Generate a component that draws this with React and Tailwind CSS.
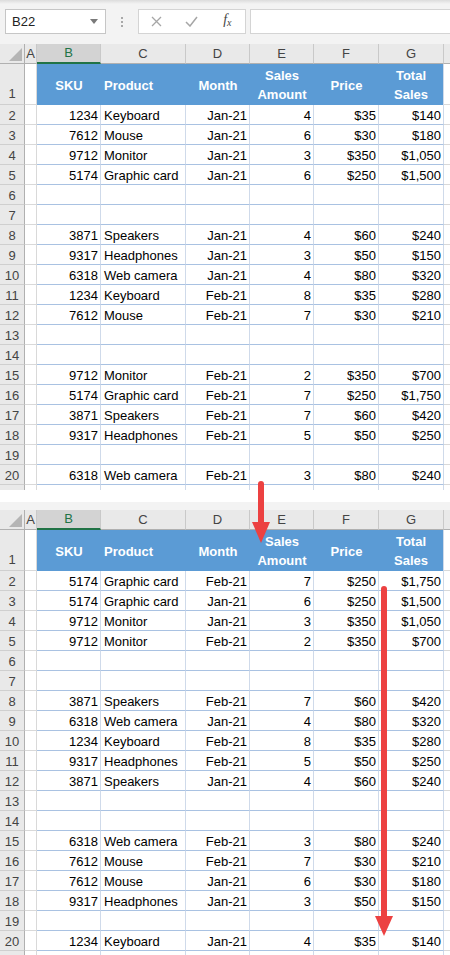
const COLS = 'grid-cols-[25px_12px_64px_85px_64px_64px_65px_65px_6px]';

const first = [
  ['1234', 'Keyboard', 'Jan-21', '4', '$35', '$140'],
  ['7612', 'Mouse', 'Jan-21', '6', '$30', '$180'],
  ['9712', 'Monitor', 'Jan-21', '3', '$350', '$1,050'],
  ['5174', 'Graphic card', 'Jan-21', '6', '$250', '$1,500'],
  null,
  null,
  ['3871', 'Speakers', 'Jan-21', '4', '$60', '$240'],
  ['9317', 'Headphones', 'Jan-21', '3', '$50', '$150'],
  ['6318', 'Web camera', 'Jan-21', '4', '$80', '$320'],
  ['1234', 'Keyboard', 'Feb-21', '8', '$35', '$280'],
  ['7612', 'Mouse', 'Feb-21', '7', '$30', '$210'],
  null,
  null,
  ['9712', 'Monitor', 'Feb-21', '2', '$350', '$700'],
  ['5174', 'Graphic card', 'Feb-21', '7', '$250', '$1,750'],
  ['3871', 'Speakers', 'Feb-21', '7', '$60', '$420'],
  ['9317', 'Headphones', 'Feb-21', '5', '$50', '$250'],
  null,
  ['6318', 'Web camera', 'Feb-21', '3', '$80', '$240'],
];

const sorted = [
  ['5174', 'Graphic card', 'Feb-21', '7', '$250', '$1,750'],
  ['5174', 'Graphic card', 'Jan-21', '6', '$250', '$1,500'],
  ['9712', 'Monitor', 'Jan-21', '3', '$350', '$1,050'],
  ['9712', 'Monitor', 'Feb-21', '2', '$350', '$700'],
  null,
  null,
  ['3871', 'Speakers', 'Feb-21', '7', '$60', '$420'],
  ['6318', 'Web camera', 'Jan-21', '4', '$80', '$320'],
  ['1234', 'Keyboard', 'Feb-21', '8', '$35', '$280'],
  ['9317', 'Headphones', 'Feb-21', '5', '$50', '$250'],
  ['3871', 'Speakers', 'Jan-21', '4', '$60', '$240'],
  null,
  null,
  ['6318', 'Web camera', 'Feb-21', '3', '$80', '$240'],
  ['7612', 'Mouse', 'Feb-21', '7', '$30', '$210'],
  ['7612', 'Mouse', 'Jan-21', '6', '$30', '$180'],
  ['9317', 'Headphones', 'Jan-21', '3', '$50', '$150'],
  null,
  ['1234', 'Keyboard', 'Jan-21', '4', '$35', '$140'],
];

const EMPTY = ['', '', '', '', '', ''];

function FormulaBar() {
  return (
    <div className="h-[44px] bg-[#f3f3f3] flex flex-col">
      <div className="h-[4px] bg-gradient-to-b from-[#dcdcdc] to-[#f3f3f3]" />
      <div className="mt-[5px] h-[25px] flex pl-[5px]">
        <div className="w-[101px] h-[25px] bg-white border border-[#c6c6c6] flex items-center justify-between pl-[6px] pr-[7px] text-[13px] leading-[18px] text-[#222]">
          <span>B22</span>
          <svg width="8" height="5" viewBox="0 0 8 5"><path d="M0 0h8L4 5z" fill="#7a7a7a" /></svg>
        </div>
        <div className="w-[32px] flex flex-col items-center justify-center gap-[2px]">
          <span className="w-[2px] h-[2px] bg-[#a8a8a8]" />
          <span className="w-[2px] h-[2px] bg-[#a8a8a8]" />
          <span className="w-[2px] h-[2px] bg-[#a8a8a8]" />
        </div>
        <div className="w-[108px] h-[25px] bg-white border border-[#d4d4d4] flex items-center">
          <span className="w-[36px] flex justify-center">
            <svg width="11" height="11" viewBox="0 0 11 11"><path d="M1 1l9 9M10 1l-9 9" stroke="#a6a6a6" strokeWidth="1.3" /></svg>
          </span>
          <span className="w-[36px] flex justify-center">
            <svg width="13" height="11" viewBox="0 0 13 11"><path d="M1 6l4 4 7-9" stroke="#a6a6a6" strokeWidth="1.5" fill="none" /></svg>
          </span>
          <span className="w-[36px] flex justify-center italic text-[#444] text-[14px] leading-[18px] font-['Liberation_Serif',serif]">
            f<span className="text-[10px] mt-[3px]">x</span>
          </span>
        </div>
        <div className="ml-[4px] flex-1 h-[25px] bg-white border border-r-0 border-[#d4d4d4]" />
      </div>
    </div>
  );
}

function ColumnHeads() {
  const letters = ['C', 'D', 'E', 'F', 'G'];
  return (
    <div className={`grid ${COLS} h-[20px] bg-[#e9e9e9] text-[#444] text-[13px] leading-[16px] overflow-hidden`}>
      <div className="relative border-r border-b border-[#b0b0b0]">
        <svg className="absolute left-[9px] top-[4px]" width="13" height="13" viewBox="0 0 13 13"><path d="M13 0v13H0z" fill="#b5b5b5" /></svg>
      </div>
      <div className="flex items-center justify-center border-r border-b border-r-[#c9c9c9] border-b-[#b0b0b0]">A</div>
      <div className="flex items-center justify-center bg-[#d3d3d3] text-[#217346] border-r border-r-[#c9c9c9] border-b-2 border-b-[#217346]">B</div>
      {letters.map((l) => (
        <div key={l} className="flex items-center justify-center border-r border-b border-r-[#c9c9c9] border-b-[#b0b0b0]">{l}</div>
      ))}
      <div className="border-b border-[#b0b0b0]" />
    </div>
  );
}

function HeaderRow() {
  const blue = 'bg-[#5b9bd5] text-white font-bold flex items-center leading-[19px] pt-[1px]';
  return (
    <div className={`grid ${COLS} h-[41px] text-[13px] overflow-hidden`}>
      <div className="flex items-end justify-center pb-[1px] bg-[#e9e9e9] text-[#444] leading-[18px] border-r border-b border-r-[#b0b0b0] border-b-[#cfcfcf]">1</div>
      <div className="border-r border-b border-[#d9d9d9]" />
      <div className={`${blue} justify-center`}>SKU</div>
      <div className={`${blue} pl-[3px]`}>Product</div>
      <div className={`${blue} justify-center`}>Month</div>
      <div className={`${blue} justify-center text-center`}>Sales<br />Amount</div>
      <div className={`${blue} justify-center`}>Price</div>
      <div className={`${blue} justify-center text-center border-r border-[#cfdaea]`}>Total<br />Sales</div>
      <div className="border-b border-[#d9d9d9]" />
    </div>
  );
}

function Row({ n, cells, h = 'h-[20px]', last }) {
  const b = last ? '' : 'border-b';
  return (
    <div className={`grid ${COLS} ${h} text-[13px] leading-[16px] overflow-hidden`}>
      <div className={`flex items-center justify-center pt-[2px] bg-[#e9e9e9] text-[#444] border-r ${b} border-r-[#b0b0b0] border-b-[#cfcfcf]`}>{n}</div>
      <div className={`border-r ${b} border-[#d9d9d9]`} />
      {cells.map((c, i) => (
        <div
          key={i}
          className={`flex items-center pt-[2px] whitespace-nowrap overflow-hidden text-black border-r ${b} border-r-[#cfdaea] border-b-[#a9c2e2] ${i === 1 ? 'pl-[3px]' : 'justify-end pr-[2px]'}`}
        >
          {c}
        </div>
      ))}
      <div className={`${b} border-[#d9d9d9]`} />
    </div>
  );
}

function Sheet({ rows, partial }) {
  return (
    <>
      <ColumnHeads />
      <HeaderRow />
      {rows.map((r, i) => (
        <Row key={i} n={i + 2} cells={r || EMPTY} />
      ))}
      <Row n="" cells={EMPTY} h={partial} last />
    </>
  );
}

export default function App() {
  return (
    <div className="relative w-[450px] h-[955px] overflow-hidden bg-white font-['Liberation_Sans',Arial,sans-serif]">
      <FormulaBar />
      <Sheet rows={first} partial="h-[5px]" />
      <div className="h-[12px] bg-white" />
      <div className="h-[8px] bg-[#f3f3f3]" />
      <Sheet rows={sorted} partial="h-[4px]" />

      <svg className="absolute inset-0 pointer-events-none" width="450" height="955" viewBox="0 0 450 955">
        <line x1="261" y1="484" x2="261" y2="526" stroke="#ec4141" strokeWidth="6" strokeLinecap="round" />
        <path d="M252 522h18l-9 21z" fill="#ec4141" />
        <line x1="384" y1="589" x2="384" y2="920" stroke="#ec4141" strokeWidth="6" strokeLinecap="round" />
        <path d="M375 916h18l-9 20z" fill="#ec4141" />
      </svg>
    </div>
  );
}
